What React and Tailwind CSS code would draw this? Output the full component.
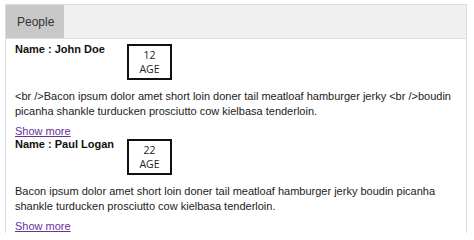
import React from 'react'

const people = [
  {
    name: 'John Doe',
    age: 12,
    text: '<br />Bacon ipsum dolor amet short loin doner tail meatloaf hamburger jerky <br />boudin picanha shankle turducken prosciutto cow kielbasa tenderloin.',
  },
  {
    name: 'Paul Logan',
    age: 22,
    text: 'Bacon ipsum dolor amet short loin doner tail meatloaf hamburger jerky boudin picanha shankle turducken prosciutto cow kielbasa tenderloin.',
  },
]

const Person = ({ person }) => {
  return (
    <div>
      <div className="flex items-start">
        <div className="w-[112px] text-[11px] leading-[13px] font-bold text-[#111] pt-[1px]">
          Name : {person.name}
        </div>
        <div className="w-[45px] h-[36px] mt-[2px] border-2 border-[#111] flex flex-col items-center justify-center font-['Open_Sans',sans-serif] text-[10.5px] leading-[14px] text-[#222]">
          <span>{person.age}</span>
          <span>AGE</span>
        </div>
      </div>
      <p className="mt-[9px] text-[11px] leading-[15px] text-[#222]">{person.text}</p>
      <a href="#" className="block mt-[6px] text-[11px] leading-[12px] text-[#663399] underline">
        Show more
      </a>
    </div>
  )
}

const App = () => {
  return (
    <div className="bg-white w-[474px] h-[233px] overflow-hidden pt-[4px] pl-[5px] font-['Liberation_Sans',Arial,sans-serif]">
      <div className="w-[462px] h-[240px] border border-[#dddddd]">
        {/* Tabs */}
        <div className="flex h-[34px] bg-[#f0f0f0] border-b border-[#dddddd]">
          <div className="w-[58px] bg-[#c8c8c8] flex items-center pl-[11px] text-[12px] text-[#333]">
            People
          </div>
        </div>

        {/* People list */}
        <div className="pl-[9px] pr-[10px] pt-[3px]">
          {people.map((p) => (
            <Person key={p.name} person={p} />
          ))}
        </div>
      </div>
    </div>
  )
}

export default App
